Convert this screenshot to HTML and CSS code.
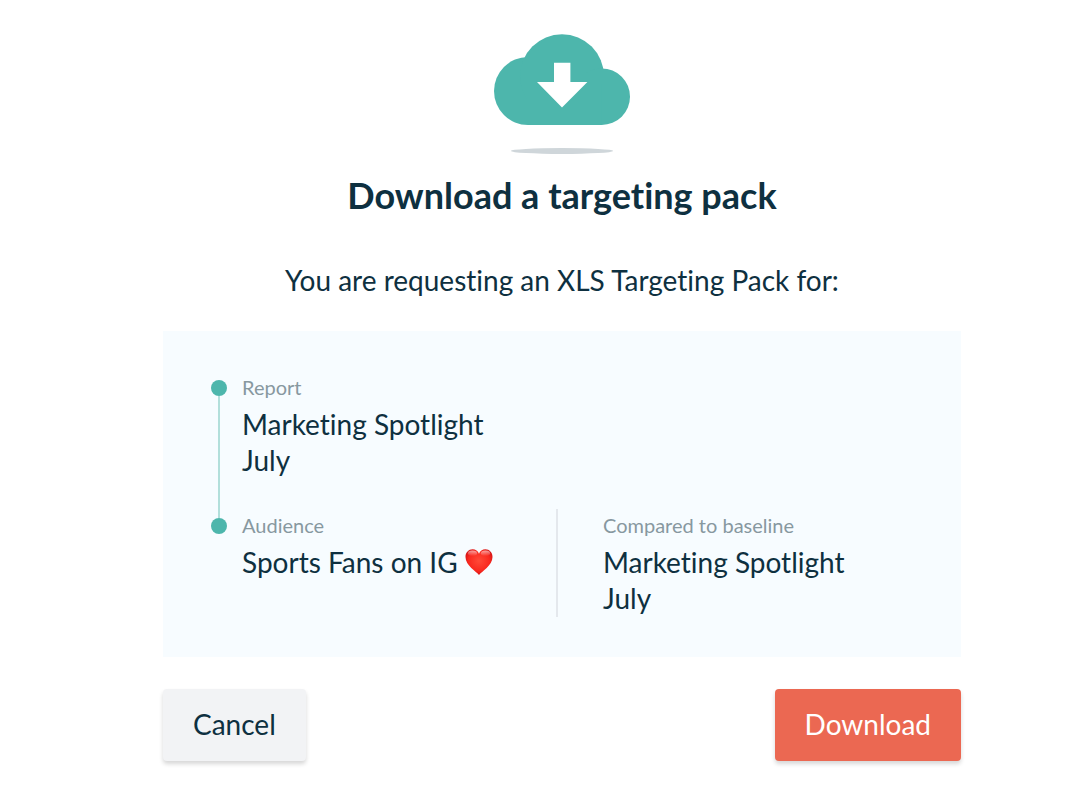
FILE: index.html
```html
<!DOCTYPE html>
<html lang="en">
<head>
    <meta charset="UTF-8">
    <meta name="viewport" content="width=device-width, initial-scale=1.0">
    <title>Download a targeting pack</title>
    <link rel="stylesheet" href="styles.css">
</head>
<body>
    <main class="dialog">
        <header class="header">
            <svg class="cloud-icon" viewBox="0 0 136 120" aria-hidden="true">
                <g fill="#4db6ac">
                    <circle cx="34" cy="57" r="34"/>
                    <circle cx="68" cy="42.300" r="42"/>
                    <circle cx="107.7" cy="62.7" r="28.3"/>
                    <path d="M34 50h73.7v41H34z"/>
                </g>
                <path d="M60 28.7h16.4V48h17L68 73.5 43 48h17z" fill="#fff"/>
                <ellipse cx="68" cy="117" rx="51" ry="3" fill="#cfd6da"/>
            </svg>
            <h1>Download a targeting pack</h1>
            <p class="intro">You are requesting an XLS Targeting Pack for:</p>
        </header>

        <section class="summary">
            <div class="step step-linked">
                <div class="field">
                    <h2 class="field-label">Report</h2>
                    <p class="field-value">Marketing Spotlight July</p>
                </div>
            </div>
            <div class="step">
                <div class="field">
                    <h2 class="field-label">Audience</h2>
                    <p class="field-value">
                        Sports Fans on IG
                        <svg class="heart-icon" viewBox="0 0 28 26" role="img" aria-label="Heart">
                            <defs>
                                <radialGradient id="heartFill" cx="50%" cy="45%" r="60%">
                                    <stop offset="0" stop-color="#ff4a38"/>
                                    <stop offset="0.65" stop-color="#f9291f"/>
                                    <stop offset="1" stop-color="#c90d12"/>
                                </radialGradient>
                                <linearGradient id="heartShine" x1="0" y1="0" x2="0" y2="1">
                                    <stop offset="0" stop-color="#fff" stop-opacity="0.6"/>
                                    <stop offset="1" stop-color="#fff" stop-opacity="0"/>
                                </linearGradient>
                            </defs>
                            <path d="M14 26C11.5 22.5 0.5 16.5 0.5 8 0.5 3.5 3.7 0.3 7.6 0.3c3 0 5.3 1.7 6.4 4.4C15.1 2 17.4 0.3 20.4 0.3c3.9 0 7.1 3.2 7.1 7.7C27.5 16.5 16.5 22.5 14 26z" fill="url(#heartFill)"/>
                            <ellipse cx="7.5" cy="4.2" rx="4.6" ry="2.8" fill="url(#heartShine)"/>
                            <ellipse cx="20.5" cy="4.2" rx="4.6" ry="2.8" fill="url(#heartShine)"/>
                        </svg>
                    </p>
                </div>
                <div class="field field-baseline">
                    <h2 class="field-label">Compared to baseline</h2>
                    <p class="field-value">Marketing Spotlight July</p>
                </div>
            </div>
        </section>

        <div class="actions">
            <button type="button" class="btn btn-secondary">Cancel</button>
            <button type="button" class="btn btn-primary">Download</button>
        </div>
    </main>
</body>
</html>
```

FILE: styles.css
```css
* {
    box-sizing: border-box;
}

body {
    margin: 0;
    padding: 34px 109px 32px 163px;
    background: #fff;
    color: #0e3040;
    font-family: Lato, "Open Sans", sans-serif;
    font-size: 28px;
    font-variant-ligatures: none;
    line-height: 36px;
}

h1,
h2,
p {
    margin: 0;
}

.header {
    display: flex;
    flex-direction: column;
    align-items: center;
    text-align: center;
}

.cloud-icon {
    width: 136px;
    height: 120px;
}

.header h1 {
    margin-top: 19px;
    font-size: 36px;
    font-weight: bold;
    line-height: 44px;
}

.intro {
    margin-top: 45px;
}

.summary {
    margin-top: 33px;
    padding: 44px 48px 41px;
    background: #f7fcff;
}

.step {
    position: relative;
    display: grid;
    grid-template-columns: 314px 1fr;
    padding-left: 31px;
}

.step::before {
    content: "";
    position: absolute;
    top: 5px;
    left: 0;
    width: 16px;
    height: 16px;
    border-radius: 50%;
    background: #4db6ac;
}

.step-linked {
    padding-bottom: 35px;
}

/* line down to the next dot */
.step-linked::after {
    content: "";
    position: absolute;
    top: 21px;
    bottom: -5px;
    left: 7px;
    width: 2px;
    background: #b2dfdb;
}

.field-label {
    margin-bottom: 7px;
    color: #87989f;
    font-size: 20px;
    font-weight: normal;
    line-height: 24px;
}

.field-value {
    max-width: 264px;
}

.field-baseline {
    position: relative;
    padding-left: 47px;
}

.field-baseline::before {
    content: "";
    position: absolute;
    top: -4px;
    bottom: -1px;
    left: 0;
    width: 2px;
    background: #e4e8ed;
}

.heart-icon {
    width: 28px;
    height: 26px;
    vertical-align: -2px;
}

.actions {
    display: flex;
    justify-content: space-between;
    margin-top: 32px;
}

.btn {
    padding: 17px 30px 19px;
    border: none;
    border-radius: 4px;
    box-shadow: 0 3px 4px rgba(0, 0, 0, 0.16);
    font: inherit;
    font-variant-ligatures: none;
    cursor: pointer;
}

.btn-primary {
    background: #eb6852;
    color: #fff;
}

.btn-secondary {
    background: #f2f3f5;
    color: #0e3040;
}
```
